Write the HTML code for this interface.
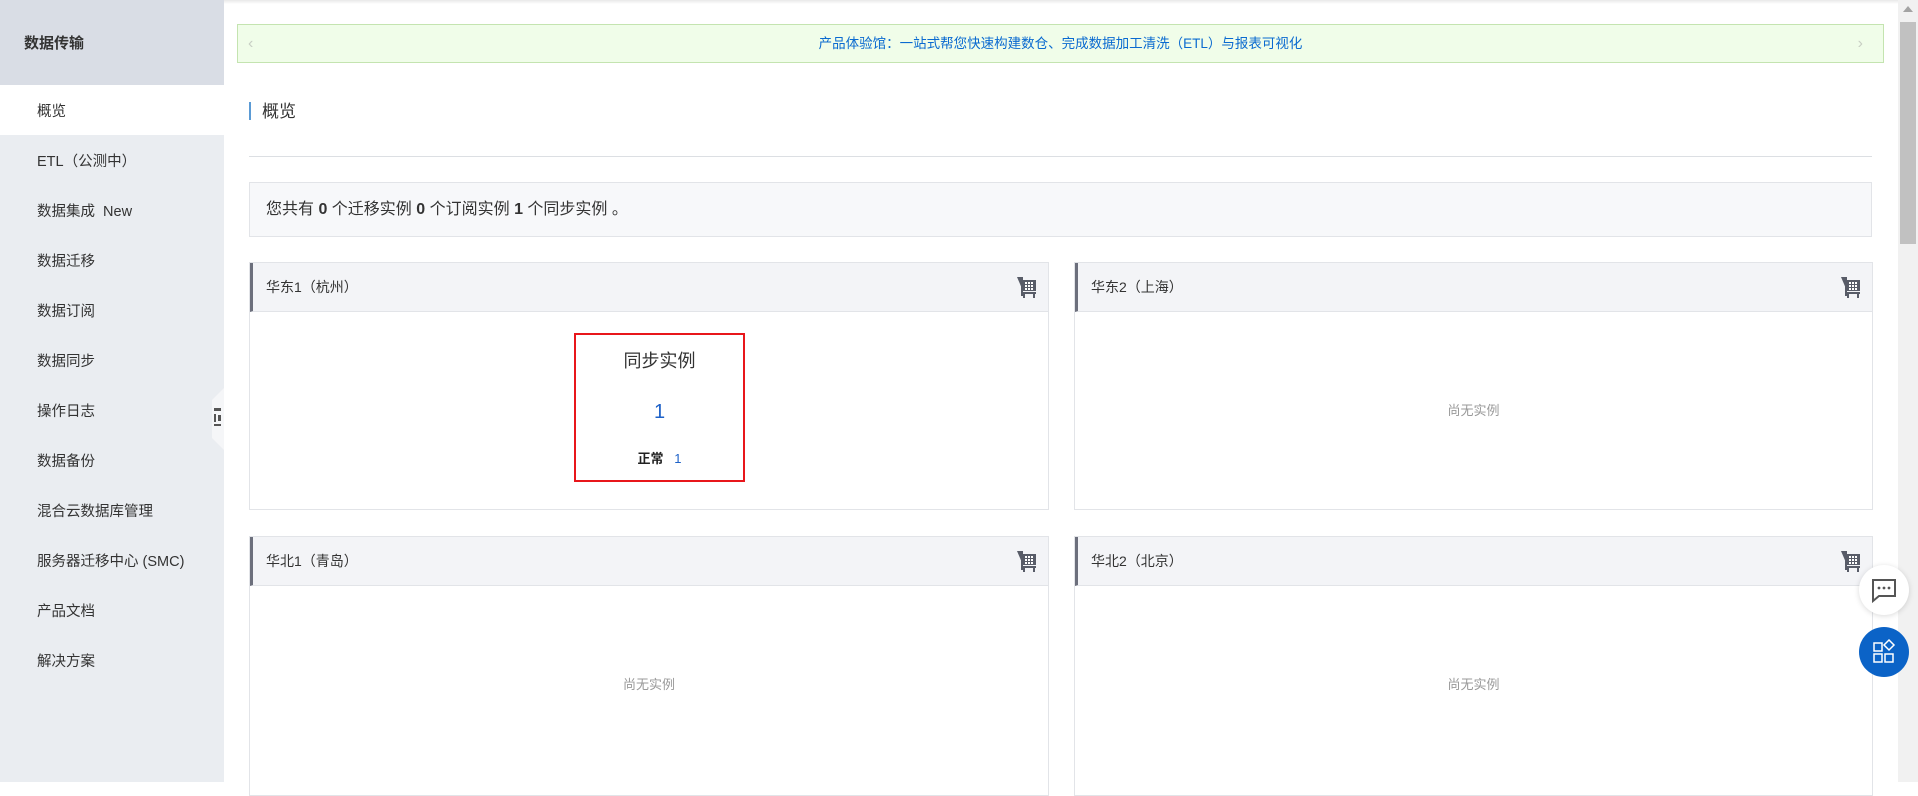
<!DOCTYPE html>
<html><head><meta charset="utf-8"><style>
*{box-sizing:border-box;margin:0;padding:0}
body{width:1918px;height:782px;overflow:hidden;background:#fff;font-family:"Liberation Sans","Noto Sans CJK SC",sans-serif;position:relative;color:#333}
.abs{position:absolute}
#side{left:0;top:0;width:224px;height:782px;background:#eaedf1}
#sh{left:0;top:0;width:224px;height:85px;background:#d9dde5;font-size:15px;font-weight:bold;color:#333;padding:32px 0 0 24px}
.mi{position:absolute;left:37px;font-size:14.5px;color:#333;line-height:20px}
#act{left:0;top:85px;width:224px;height:50px;background:#fff}
#banner{left:237px;top:24px;width:1647px;height:39px;background:#f0fde9;border:1px solid #c4e4b0;text-align:center;font-size:13.5px;color:#0a6ad0;line-height:37px}
.chev{position:absolute;top:0;color:#c8cfc4;font-size:16px}
.card{position:absolute;border:1px solid #e2e4e8;background:#fff}
.ch{height:49px;background:#f3f4f7;border-left:3px solid #6c6f7c;border-bottom:1px solid #e2e4e8;font-size:14px;line-height:48px;padding-left:13px;color:#333;position:relative}
.cart{position:absolute;right:10px;top:13px}
.none{position:absolute;width:100%;text-align:center;color:#999;font-size:13px}
</style></head><body>
<div class="abs" style="left:0;top:0;width:1918px;height:4px;background:linear-gradient(#e8e8e8,#fff)"></div>
<div id="side" class="abs"></div>
<div id="sh" class="abs">数据传输</div>
<div id="act" class="abs"></div>
<div class="mi" style="top:102px">概览</div>
<div class="mi" style="top:152px">ETL（公测中）</div>
<div class="mi" style="top:202px">数据集成&nbsp;&nbsp;New</div>
<div class="mi" style="top:252px">数据迁移</div>
<div class="mi" style="top:302px">数据订阅</div>
<div class="mi" style="top:352px">数据同步</div>
<div class="mi" style="top:402px">操作日志</div>
<div class="mi" style="top:452px">数据备份</div>
<div class="mi" style="top:502px">混合云数据库管理</div>
<div class="mi" style="top:552px">服务器迁移中心 (SMC)</div>
<div class="mi" style="top:602px">产品文档</div>
<div class="mi" style="top:652px">解决方案</div>
<svg class="abs" style="left:206px;top:388px" width="18" height="62"><polygon points="18,0 18,62 6,50 6,12" fill="#f5f6f8"/><rect x="8" y="20" width="7" height="3" fill="#555"/><rect x="8" y="26" width="2" height="8" fill="#555"/><rect x="12" y="27" width="3" height="6" fill="#555"/><rect x="8" y="36" width="7" height="2" fill="#555"/></svg>

<div id="banner" class="abs"><span class="chev" style="left:10px">&#8249;</span>产品体验馆：一站式帮您快速构建数仓、完成数据加工清洗（ETL）与报表可视化<span class="chev" style="right:20px">&#8250;</span></div>

<div class="abs" style="left:249px;top:102px;width:2px;height:18px;background:#5b9bd5"></div>
<div class="abs" style="left:262px;top:101px;font-size:17px;color:#333;line-height:22px">概览</div>
<div class="abs" style="left:249px;top:156px;width:1623px;height:1px;background:#dcdfe3"></div>
<div class="abs" style="left:249px;top:182px;width:1623px;height:55px;background:#f7f8fa;border:1px solid #e2e4e8;font-size:16px;line-height:53px;padding-left:16px;color:#333">您共有 <b>0</b> 个迁移实例 <b>0</b> 个订阅实例 <b>1</b> 个同步实例 。</div>

<svg width="0" height="0" style="position:absolute"><defs><g id="cart"><path d="M1 1 L5 1 L6 4 L20 4 L20 15 L7 15 Z" fill="#585c68"/><rect x="5" y="1" width="2" height="19" fill="#585c68"/><rect x="5" y="16" width="15" height="2" fill="#585c68"/><rect x="7" y="18" width="2" height="4" fill="#585c68"/><rect x="17" y="18" width="2" height="4" fill="#585c68"/><g fill="#fff"><rect x="9" y="6" width="2" height="2"/><rect x="12" y="6" width="2" height="2"/><rect x="15" y="6" width="2" height="2"/><rect x="9" y="9" width="2" height="2"/><rect x="12" y="9" width="2" height="2"/><rect x="15" y="9" width="2" height="2"/><rect x="9" y="12" width="2" height="2"/><rect x="12" y="12" width="2" height="2"/><rect x="15" y="12" width="2" height="2"/></g></g></defs></svg>

<div class="card" style="left:249px;top:262px;width:800px;height:248px"><div class="ch">华东1（杭州）<svg class="cart" width="22" height="23"><use href="#cart"/></svg></div></div>
<div class="abs" style="left:574px;top:333px;width:171px;height:149px;border:2px solid #e8161b;text-align:center">
<div style="margin-top:14px;font-size:18px;color:#333;line-height:24px">同步实例</div>
<div style="margin-top:27px;font-size:20px;color:#1e62c8;line-height:24px">1</div>
<div style="margin-top:26px;font-size:13px;font-weight:bold;color:#222;line-height:18px">正常&nbsp;&nbsp;&nbsp;<span style="font-weight:normal;color:#1e62c8">1</span></div>
</div>
<div class="card" style="left:1074px;top:262px;width:799px;height:248px"><div class="ch">华东2（上海）<svg class="cart" width="22" height="23"><use href="#cart"/></svg></div><div class="none" style="top:137px">尚无实例</div></div>
<div class="card" style="left:249px;top:536px;width:800px;height:260px"><div class="ch">华北1（青岛）<svg class="cart" width="22" height="23"><use href="#cart"/></svg></div><div class="none" style="top:137px">尚无实例</div></div>
<div class="card" style="left:1074px;top:536px;width:799px;height:260px"><div class="ch">华北2（北京）<svg class="cart" width="22" height="23"><use href="#cart"/></svg></div><div class="none" style="top:137px">尚无实例</div></div>

<div class="abs" style="left:1898px;top:0;width:20px;height:782px;background:#f1f1f1"></div>
<div class="abs" style="left:1900px;top:22px;width:16px;height:222px;background:#c1c1c1"></div>
<div class="abs" style="left:1903px;top:6px;width:0;height:0;border-left:5px solid transparent;border-right:5px solid transparent;border-bottom:6px solid #a3a3a3"></div>

<div class="abs" style="left:1859px;top:565px;width:50px;height:50px;border-radius:50%;background:#fff;box-shadow:0 1px 6px rgba(0,0,0,.15)"><svg width="50" height="50"><path d="M14 15 H36 V31 H20 L14 36 Z" fill="none" stroke="#555" stroke-width="2"/><circle cx="20" cy="23" r="1.4" fill="#555"/><circle cx="25" cy="23" r="1.4" fill="#555"/><circle cx="30" cy="23" r="1.4" fill="#555"/></svg></div>
<div class="abs" style="left:1859px;top:627px;width:50px;height:50px;border-radius:50%;background:#0b63c7"><svg width="50" height="50" fill="none" stroke="#fff" stroke-width="1.5"><rect x="15" y="16" width="8" height="8"/><rect x="15" y="27" width="8" height="8"/><rect x="26" y="27" width="8" height="8"/><path d="M30 13 L35 18 L30 23 L25 18 Z"/></svg></div>
</body></html>
